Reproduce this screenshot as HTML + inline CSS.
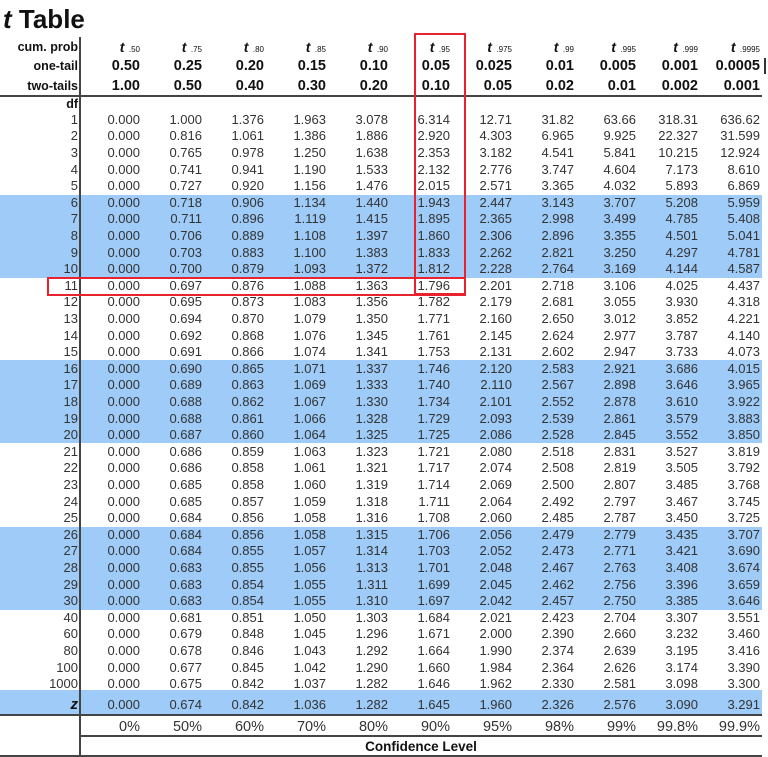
<!DOCTYPE html>
<html><head><meta charset="utf-8"><style>
*{margin:0;padding:0;box-sizing:border-box}
body{width:768px;height:757px;background:#fff;position:relative;overflow:hidden;font-family:"Liberation Sans",Arial,sans-serif;color:#333}
.a{position:absolute}
.row{position:absolute;left:0;width:768px;height:16.6px;line-height:16.6px;font-size:13px;display:flex}
.row span{display:block;width:62px;text-align:right}
.row span.df{width:78px;padding-right:0;color:#333}
.band{position:absolute;left:0;width:762px;background:#9ecbf7}
.hdr{position:absolute;left:0;width:768px;display:flex;font-weight:bold;color:#111}
.hdr span{display:block;width:62px;text-align:right}
.hdr span.df{width:78px;font-size:12.5px}
.t i{font-size:14px}
.t small{font-size:8px;font-weight:normal;font-style:normal}
</style></head><body>
<div class="a" style="left:3px;top:4px;font-size:26px;font-weight:bold;color:#111"><i>t</i> Table</div>
<div class="band" style="top:195px;height:83px"></div>
<div class="band" style="top:360px;height:83px"></div>
<div class="band" style="top:527px;height:83px"></div>
<div class="band" style="top:690px;height:25px"></div>

<div class="hdr t" style="top:38px;height:18px;line-height:18px"><span class="df">cum. prob</span><span><i>t</i> <small>.50</small></span><span><i>t</i> <small>.75</small></span><span><i>t</i> <small>.80</small></span><span><i>t</i> <small>.85</small></span><span><i>t</i> <small>.90</small></span><span><i>t</i> <small>.95</small></span><span><i>t</i> <small>.975</small></span><span><i>t</i> <small>.99</small></span><span><i>t</i> <small>.995</small></span><span><i>t</i> <small>.999</small></span><span><i>t</i> <small>.9995</small></span></div>
<div class="hdr" style="top:56px;height:20px;line-height:20px;font-size:14.5px"><span class="df">one-tail</span><span>0.50</span><span>0.25</span><span>0.20</span><span>0.15</span><span>0.10</span><span>0.05</span><span>0.025</span><span>0.01</span><span>0.005</span><span>0.001</span><span>0.0005</span></div>
<div class="hdr" style="top:76px;height:20px;line-height:20px;font-size:14.5px"><span class="df">two-tails</span><span>1.00</span><span>0.50</span><span>0.40</span><span>0.30</span><span>0.20</span><span>0.10</span><span>0.05</span><span>0.02</span><span>0.01</span><span>0.002</span><span>0.001</span></div>
<div class="a" style="left:764px;top:58px;width:2px;height:16px;background:#333"></div>
<div class="a" style="left:0;top:95px;width:762px;height:2px;background:#444"></div>
<div class="a" style="left:79px;top:37px;width:2px;height:720px;background:#444"></div>
<div class="hdr" style="top:97px;height:15px;line-height:15px;font-size:12.5px"><span class="df">df</span></div>

<div class="row" style="top:111.7px"><span class="df">1</span><span>0.000</span><span>1.000</span><span>1.376</span><span>1.963</span><span>3.078</span><span>6.314</span><span>12.71</span><span>31.82</span><span>63.66</span><span>318.31</span><span>636.62</span></div>
<div class="row" style="top:128.3px"><span class="df">2</span><span>0.000</span><span>0.816</span><span>1.061</span><span>1.386</span><span>1.886</span><span>2.920</span><span>4.303</span><span>6.965</span><span>9.925</span><span>22.327</span><span>31.599</span></div>
<div class="row" style="top:144.9px"><span class="df">3</span><span>0.000</span><span>0.765</span><span>0.978</span><span>1.250</span><span>1.638</span><span>2.353</span><span>3.182</span><span>4.541</span><span>5.841</span><span>10.215</span><span>12.924</span></div>
<div class="row" style="top:161.5px"><span class="df">4</span><span>0.000</span><span>0.741</span><span>0.941</span><span>1.190</span><span>1.533</span><span>2.132</span><span>2.776</span><span>3.747</span><span>4.604</span><span>7.173</span><span>8.610</span></div>
<div class="row" style="top:178.1px"><span class="df">5</span><span>0.000</span><span>0.727</span><span>0.920</span><span>1.156</span><span>1.476</span><span>2.015</span><span>2.571</span><span>3.365</span><span>4.032</span><span>5.893</span><span>6.869</span></div>
<div class="row" style="top:194.7px"><span class="df">6</span><span>0.000</span><span>0.718</span><span>0.906</span><span>1.134</span><span>1.440</span><span>1.943</span><span>2.447</span><span>3.143</span><span>3.707</span><span>5.208</span><span>5.959</span></div>
<div class="row" style="top:211.3px"><span class="df">7</span><span>0.000</span><span>0.711</span><span>0.896</span><span>1.119</span><span>1.415</span><span>1.895</span><span>2.365</span><span>2.998</span><span>3.499</span><span>4.785</span><span>5.408</span></div>
<div class="row" style="top:227.9px"><span class="df">8</span><span>0.000</span><span>0.706</span><span>0.889</span><span>1.108</span><span>1.397</span><span>1.860</span><span>2.306</span><span>2.896</span><span>3.355</span><span>4.501</span><span>5.041</span></div>
<div class="row" style="top:244.5px"><span class="df">9</span><span>0.000</span><span>0.703</span><span>0.883</span><span>1.100</span><span>1.383</span><span>1.833</span><span>2.262</span><span>2.821</span><span>3.250</span><span>4.297</span><span>4.781</span></div>
<div class="row" style="top:261.1px"><span class="df">10</span><span>0.000</span><span>0.700</span><span>0.879</span><span>1.093</span><span>1.372</span><span>1.812</span><span>2.228</span><span>2.764</span><span>3.169</span><span>4.144</span><span>4.587</span></div>
<div class="row" style="top:277.7px"><span class="df">11</span><span>0.000</span><span>0.697</span><span>0.876</span><span>1.088</span><span>1.363</span><span>1.796</span><span>2.201</span><span>2.718</span><span>3.106</span><span>4.025</span><span>4.437</span></div>
<div class="row" style="top:294.3px"><span class="df">12</span><span>0.000</span><span>0.695</span><span>0.873</span><span>1.083</span><span>1.356</span><span>1.782</span><span>2.179</span><span>2.681</span><span>3.055</span><span>3.930</span><span>4.318</span></div>
<div class="row" style="top:310.9px"><span class="df">13</span><span>0.000</span><span>0.694</span><span>0.870</span><span>1.079</span><span>1.350</span><span>1.771</span><span>2.160</span><span>2.650</span><span>3.012</span><span>3.852</span><span>4.221</span></div>
<div class="row" style="top:327.5px"><span class="df">14</span><span>0.000</span><span>0.692</span><span>0.868</span><span>1.076</span><span>1.345</span><span>1.761</span><span>2.145</span><span>2.624</span><span>2.977</span><span>3.787</span><span>4.140</span></div>
<div class="row" style="top:344.1px"><span class="df">15</span><span>0.000</span><span>0.691</span><span>0.866</span><span>1.074</span><span>1.341</span><span>1.753</span><span>2.131</span><span>2.602</span><span>2.947</span><span>3.733</span><span>4.073</span></div>
<div class="row" style="top:360.7px"><span class="df">16</span><span>0.000</span><span>0.690</span><span>0.865</span><span>1.071</span><span>1.337</span><span>1.746</span><span>2.120</span><span>2.583</span><span>2.921</span><span>3.686</span><span>4.015</span></div>
<div class="row" style="top:377.3px"><span class="df">17</span><span>0.000</span><span>0.689</span><span>0.863</span><span>1.069</span><span>1.333</span><span>1.740</span><span>2.110</span><span>2.567</span><span>2.898</span><span>3.646</span><span>3.965</span></div>
<div class="row" style="top:393.9px"><span class="df">18</span><span>0.000</span><span>0.688</span><span>0.862</span><span>1.067</span><span>1.330</span><span>1.734</span><span>2.101</span><span>2.552</span><span>2.878</span><span>3.610</span><span>3.922</span></div>
<div class="row" style="top:410.5px"><span class="df">19</span><span>0.000</span><span>0.688</span><span>0.861</span><span>1.066</span><span>1.328</span><span>1.729</span><span>2.093</span><span>2.539</span><span>2.861</span><span>3.579</span><span>3.883</span></div>
<div class="row" style="top:427.1px"><span class="df">20</span><span>0.000</span><span>0.687</span><span>0.860</span><span>1.064</span><span>1.325</span><span>1.725</span><span>2.086</span><span>2.528</span><span>2.845</span><span>3.552</span><span>3.850</span></div>
<div class="row" style="top:443.7px"><span class="df">21</span><span>0.000</span><span>0.686</span><span>0.859</span><span>1.063</span><span>1.323</span><span>1.721</span><span>2.080</span><span>2.518</span><span>2.831</span><span>3.527</span><span>3.819</span></div>
<div class="row" style="top:460.3px"><span class="df">22</span><span>0.000</span><span>0.686</span><span>0.858</span><span>1.061</span><span>1.321</span><span>1.717</span><span>2.074</span><span>2.508</span><span>2.819</span><span>3.505</span><span>3.792</span></div>
<div class="row" style="top:476.9px"><span class="df">23</span><span>0.000</span><span>0.685</span><span>0.858</span><span>1.060</span><span>1.319</span><span>1.714</span><span>2.069</span><span>2.500</span><span>2.807</span><span>3.485</span><span>3.768</span></div>
<div class="row" style="top:493.5px"><span class="df">24</span><span>0.000</span><span>0.685</span><span>0.857</span><span>1.059</span><span>1.318</span><span>1.711</span><span>2.064</span><span>2.492</span><span>2.797</span><span>3.467</span><span>3.745</span></div>
<div class="row" style="top:510.1px"><span class="df">25</span><span>0.000</span><span>0.684</span><span>0.856</span><span>1.058</span><span>1.316</span><span>1.708</span><span>2.060</span><span>2.485</span><span>2.787</span><span>3.450</span><span>3.725</span></div>
<div class="row" style="top:526.7px"><span class="df">26</span><span>0.000</span><span>0.684</span><span>0.856</span><span>1.058</span><span>1.315</span><span>1.706</span><span>2.056</span><span>2.479</span><span>2.779</span><span>3.435</span><span>3.707</span></div>
<div class="row" style="top:543.3px"><span class="df">27</span><span>0.000</span><span>0.684</span><span>0.855</span><span>1.057</span><span>1.314</span><span>1.703</span><span>2.052</span><span>2.473</span><span>2.771</span><span>3.421</span><span>3.690</span></div>
<div class="row" style="top:559.9px"><span class="df">28</span><span>0.000</span><span>0.683</span><span>0.855</span><span>1.056</span><span>1.313</span><span>1.701</span><span>2.048</span><span>2.467</span><span>2.763</span><span>3.408</span><span>3.674</span></div>
<div class="row" style="top:576.5px"><span class="df">29</span><span>0.000</span><span>0.683</span><span>0.854</span><span>1.055</span><span>1.311</span><span>1.699</span><span>2.045</span><span>2.462</span><span>2.756</span><span>3.396</span><span>3.659</span></div>
<div class="row" style="top:593.1px"><span class="df">30</span><span>0.000</span><span>0.683</span><span>0.854</span><span>1.055</span><span>1.310</span><span>1.697</span><span>2.042</span><span>2.457</span><span>2.750</span><span>3.385</span><span>3.646</span></div>
<div class="row" style="top:609.7px"><span class="df">40</span><span>0.000</span><span>0.681</span><span>0.851</span><span>1.050</span><span>1.303</span><span>1.684</span><span>2.021</span><span>2.423</span><span>2.704</span><span>3.307</span><span>3.551</span></div>
<div class="row" style="top:626.3px"><span class="df">60</span><span>0.000</span><span>0.679</span><span>0.848</span><span>1.045</span><span>1.296</span><span>1.671</span><span>2.000</span><span>2.390</span><span>2.660</span><span>3.232</span><span>3.460</span></div>
<div class="row" style="top:642.9px"><span class="df">80</span><span>0.000</span><span>0.678</span><span>0.846</span><span>1.043</span><span>1.292</span><span>1.664</span><span>1.990</span><span>2.374</span><span>2.639</span><span>3.195</span><span>3.416</span></div>
<div class="row" style="top:659.5px"><span class="df">100</span><span>0.000</span><span>0.677</span><span>0.845</span><span>1.042</span><span>1.290</span><span>1.660</span><span>1.984</span><span>2.364</span><span>2.626</span><span>3.174</span><span>3.390</span></div>
<div class="row" style="top:676.1px"><span class="df">1000</span><span>0.000</span><span>0.675</span><span>0.842</span><span>1.037</span><span>1.282</span><span>1.646</span><span>1.962</span><span>2.330</span><span>2.581</span><span>3.098</span><span>3.300</span></div>
<div class="row" style="top:697px"><span class="df" style="font-weight:bold;font-style:italic;font-size:15px;color:#111">z</span><span>0.000</span><span>0.674</span><span>0.842</span><span>1.036</span><span>1.282</span><span>1.645</span><span>1.960</span><span>2.326</span><span>2.576</span><span>3.090</span><span>3.291</span></div>
<div class="a" style="left:0;top:714px;width:762px;height:2px;background:#444"></div>
<div class="row" style="top:718px;font-size:14.5px;height:18px;line-height:18px"><span class="df"></span><span>0%</span><span>50%</span><span>60%</span><span>70%</span><span>80%</span><span>90%</span><span>95%</span><span>98%</span><span>99%</span><span>99.8%</span><span>99.9%</span></div>
<div class="a" style="left:80px;top:735px;width:682px;height:2px;background:#444"></div>
<div class="a" style="left:80px;top:738px;width:682px;text-align:center;font-weight:bold;font-size:13.5px;color:#111;line-height:17px">Confidence Level</div>
<div class="a" style="left:0;top:755px;width:762px;height:2px;background:#444"></div>

<div class="a" style="left:414px;top:33px;width:52px;height:262px;border:2px solid #e8232f"></div>
<div class="a" style="left:47px;top:277px;width:419px;height:19px;border:2px solid #e8232f"></div>
</body></html>
